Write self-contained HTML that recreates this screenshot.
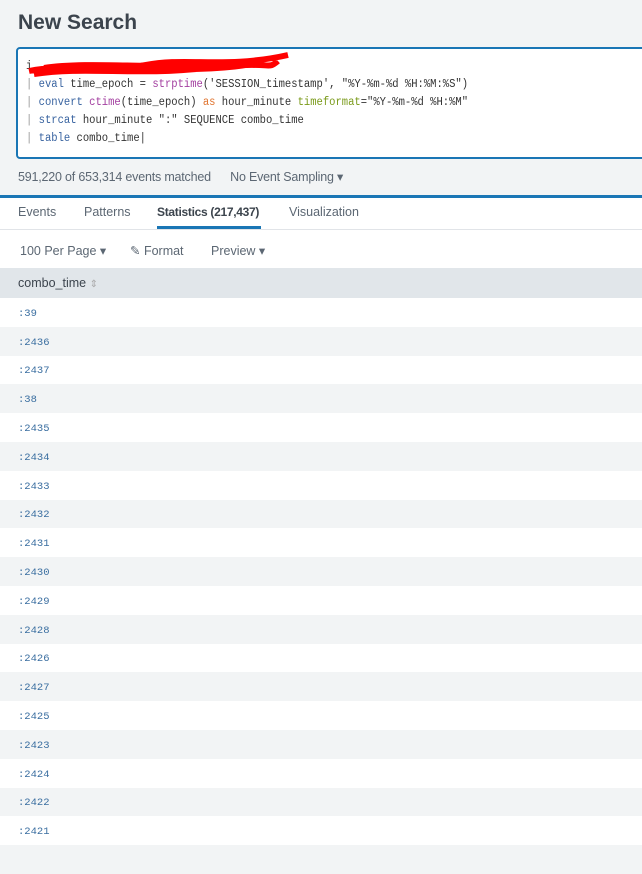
<!DOCTYPE html>
<html><head><style>
body{margin:0;width:642px;height:850px;overflow:hidden;background:#fff;font-family:"Liberation Sans",sans-serif;color:#3c444d}
.top{background:#f2f4f5;position:relative;border-bottom:3px solid #1a76b5;box-sizing:border-box;height:198px}
h1{position:absolute;left:18px;top:11px;margin:0;font-size:21px;font-weight:bold;color:#3c444d}
.box{position:absolute;left:16px;top:47px;width:640px;height:112px;box-sizing:border-box;border:2px solid #1a76b5;border-radius:4px;background:#fff;overflow:hidden}
.code{position:absolute;left:8px;top:9px;font-family:"Liberation Mono",monospace;font-size:11.5px;line-height:18px;color:#333;white-space:pre;transform:scaleX(0.915);transform-origin:0 0}
.p{color:#999}.k{color:#3863a0}.f{color:#a33fa0}.o{color:#e0742f}.g{color:#7a9a1a}
.meta{position:absolute;left:18px;top:169px;font-size:12.5px;color:#5c6773;letter-spacing:-0.2px}
.tabs{height:34px;border-bottom:1px solid #e1e4e8;position:relative;font-size:12.5px;color:#5c6773}
.tabs span{position:absolute;top:10px;white-space:nowrap}
.tb{position:absolute;left:0;top:243px;font-size:12.5px;color:#5c6773}
table{position:absolute;top:268px;left:0;width:642px;border-collapse:collapse}
th{background:#e1e6ea;height:30px;text-align:left;padding:0 18px;font-weight:normal;font-size:12.5px;color:#3c444d}
td{height:28.8px;padding:3px 18px 0;box-sizing:border-box;font-family:"Liberation Mono",monospace;font-size:10.5px;color:#3a6ea0}
tr:nth-child(odd) td{background:#f2f4f5}
</style></head><body>
<div class="top">
<h1>New Search</h1>
<div class="box">
<div class="code"><span>i</span>
<span class="p">|</span> <span class="k">eval</span> time_epoch = <span class="f">strptime</span>('SESSION_timestamp', "%Y-%m-%d %H:%M:%S")
<span class="p">|</span> <span class="k">convert</span> <span class="f">ctime</span>(time_epoch) <span class="o">as</span> hour_minute <span class="g">timeformat</span>="%Y-%m-%d %H:%M"
<span class="p">|</span> <span class="k">strcat</span> hour_minute ":" SEQUENCE combo_time
<span class="p">|</span> <span class="k">table</span> combo_time|</div>
<svg style="position:absolute;left:8px;top:0" width="270" height="30"><path d="M3 22 C40 14,80 24,120 16 S200 20,262 6 M8 25 C60 17,110 27,180 19 S240 22,252 12 M18 19 C70 11,150 23,230 13 M40 22 C100 15,160 25,220 16" stroke="#f00" stroke-width="6" fill="none"/></svg>
</div>
<div class="meta">591,220 of 653,314 events matched <span style="margin-left:16px">No Event Sampling ▾</span></div>
</div>
<div class="tabs" style="margin-top:-3px">
<span style="left:18px">Events</span><span style="left:84px">Patterns</span>
<span style="left:157px;color:#3c444d;font-weight:bold;font-size:12px;letter-spacing:-0.3px">Statistics (217,437)</span>
<span style="left:157px;top:31px;width:104px;height:3px;background:#1a76b5"></span>
<span style="left:289px">Visualization</span></div>
<div class="tb"><span style="position:absolute;left:20px;white-space:nowrap">100 Per Page ▾</span><span style="position:absolute;left:130px;white-space:nowrap">✎ Format</span><span style="position:absolute;left:211px;white-space:nowrap">Preview ▾</span></div>
<table>
<tr><th>combo_time <span style="color:#aaa;font-size:10px">⇕</span></th></tr>
<tr><td style="background:#fff">:39</td></tr>
<tr><td>:2436</td></tr><tr><td style="background:#fff">:2437</td></tr><tr><td>:38</td></tr>
<tr><td style="background:#fff">:2435</td></tr><tr><td>:2434</td></tr><tr><td style="background:#fff">:2433</td></tr>
<tr><td>:2432</td></tr><tr><td style="background:#fff">:2431</td></tr><tr><td>:2430</td></tr>
<tr><td style="background:#fff">:2429</td></tr><tr><td>:2428</td></tr><tr><td style="background:#fff">:2426</td></tr>
<tr><td>:2427</td></tr><tr><td style="background:#fff">:2425</td></tr><tr><td>:2423</td></tr>
<tr><td style="background:#fff">:2424</td></tr><tr><td>:2422</td></tr><tr><td style="background:#fff">:2421</td></tr>
<tr><td>&nbsp;</td></tr>
</table>
</body></html>
